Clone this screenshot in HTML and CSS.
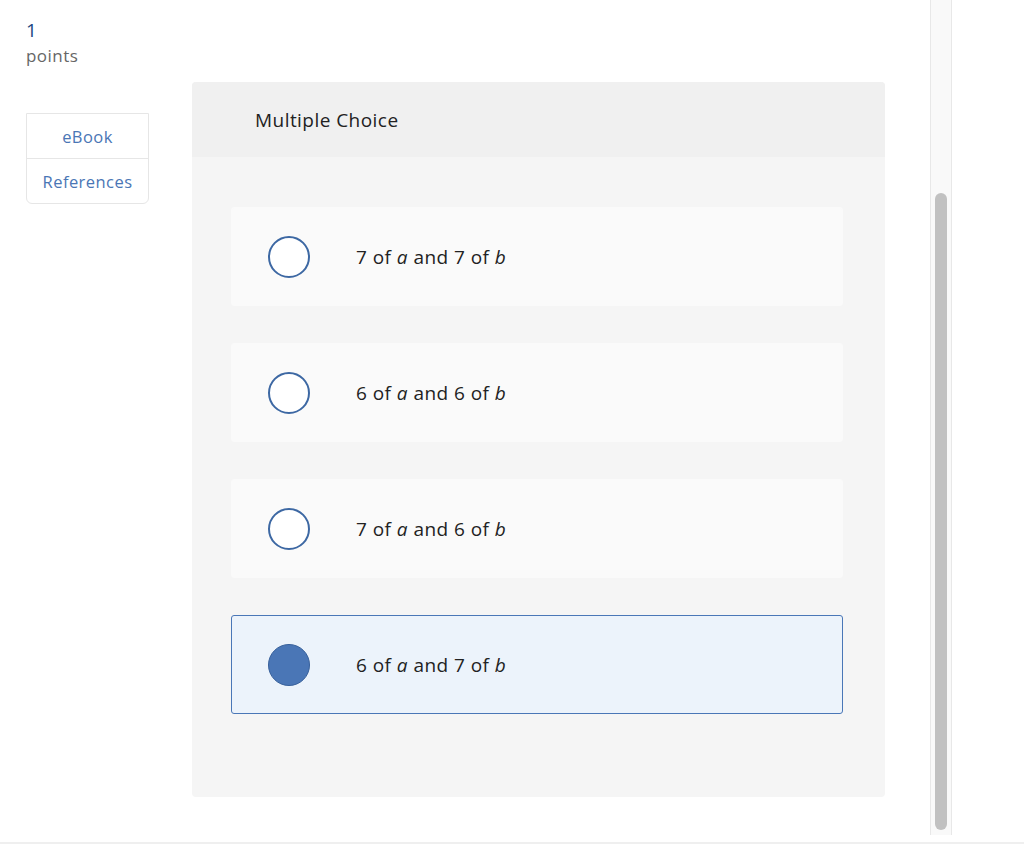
FILE: index.html
```html
<!DOCTYPE html>
<html lang="en">
<head>
    <meta charset="UTF-8">
    <meta name="viewport" content="width=device-width, initial-scale=1.0">
    <title>Question - Multiple Choice</title>
    <link rel="stylesheet" href="styles.css">
</head>
<body>
    <div class="frame">
        <div class="content">
            <!-- Points -->
            <div class="points">
                <div class="points-value">1</div>
                <div class="points-label">points</div>
            </div>

            <div class="question-row">
                <!-- Resources -->
                <div class="resources">
                    <a href="#">eBook</a>
                    <a href="#">References</a>
                </div>

                <!-- Question card -->
                <div class="question-card">
                    <div class="question-header">Multiple Choice</div>
                    <div class="choices">
                        <label class="choice">
                            <span class="radio"></span>
                            <span class="choice-text">7 of <i>a</i> and 7 of <i>b</i></span>
                        </label>
                        <label class="choice">
                            <span class="radio"></span>
                            <span class="choice-text">6 of <i>a</i> and 6 of <i>b</i></span>
                        </label>
                        <label class="choice">
                            <span class="radio"></span>
                            <span class="choice-text">7 of <i>a</i> and 6 of <i>b</i></span>
                        </label>
                        <label class="choice selected">
                            <span class="radio"></span>
                            <span class="choice-text">6 of <i>a</i> and 7 of <i>b</i></span>
                        </label>
                    </div>
                </div>
            </div>
        </div>

        <!-- Scrollbar -->
        <div class="scroll-track">
            <div class="scroll-thumb"></div>
        </div>
    </div>
    <div class="page-bottom"></div>
</body>
</html>
```

FILE: styles.css
```css
* {
    box-sizing: border-box;
    margin: 0;
    padding: 0;
}
body {
    font-family: 'Open Sans', 'Lato', sans-serif;
    letter-spacing: 0.45px;
    background: #fff;
    color: #222;
    overflow: hidden;
}
.frame {
    display: flex;
    height: 835px;
}
.content {
    width: 930px;
    padding-left: 26px;
}

/* Points */
.points {
    padding-top: 17px;
}
.points-value {
    font-size: 19px;
    line-height: 26px;
    color: #1b4782;
}
.points-label {
    font-size: 17px;
    line-height: 26px;
    color: #666;
}

/* Question row */
.question-row {
    display: flex;
    align-items: flex-start;
    margin-top: 13px;
}
.resources {
    width: 123px;
    margin-top: 31px;
    border: 1px solid #e6e6e6;
    border-radius: 0 0 6px 6px;
    display: flex;
    flex-direction: column;
}
.resources a {
    height: 44px;
    display: flex;
    align-items: center;
    justify-content: center;
    color: #4a76b5;
    font-size: 16.5px;
    text-decoration: none;
}
.resources a + a {
    height: 45px;
    border-top: 1px solid #e6e6e6;
}

/* Question card */
.question-card {
    width: 693px;
    margin-left: 43px;
    background: #f5f5f5;
    border-radius: 4px;
    overflow: hidden;
}
.question-header {
    height: 75px;
    background: #f0f0f0;
    padding-left: 63px;
    display: flex;
    align-items: center;
    font-size: 19px;
    color: #222;
}
.choices {
    padding: 50px 42px 83px 39px;
    display: flex;
    flex-direction: column;
    gap: 37px;
}
.choice {
    height: 99px;
    background: #fafafa;
    border: 1px solid #fafafa;
    border-radius: 3px;
    display: flex;
    align-items: center;
    padding-left: 36px;
    cursor: pointer;
}
.choice.selected {
    background: #ecf3fb;
    border-color: #4a77b7;
}
.radio {
    width: 42px;
    height: 42px;
    border-radius: 50%;
    border: 2px solid #3d68a3;
    background: #fff;
    flex-shrink: 0;
}
.choice.selected .radio {
    background: #4a76b6;
    border-color: #37609b;
    border-width: 1px;
}
.choice-text {
    margin-left: 46px;
    font-size: 19px;
    color: #222;
}

/* Scrollbar */
.scroll-track {
    width: 22px;
    background: #f9f9f9;
    border-left: 1px solid #e8e8e8;
    border-right: 1px solid #e8e8e8;
    padding: 193px 4px 5px 4px;
}
.scroll-thumb {
    height: 100%;
    background: #c1c1c1;
    border-radius: 6px;
}

.page-bottom {
    margin-top: 7px;
    border-top: 2px solid #efefef;
}
```
